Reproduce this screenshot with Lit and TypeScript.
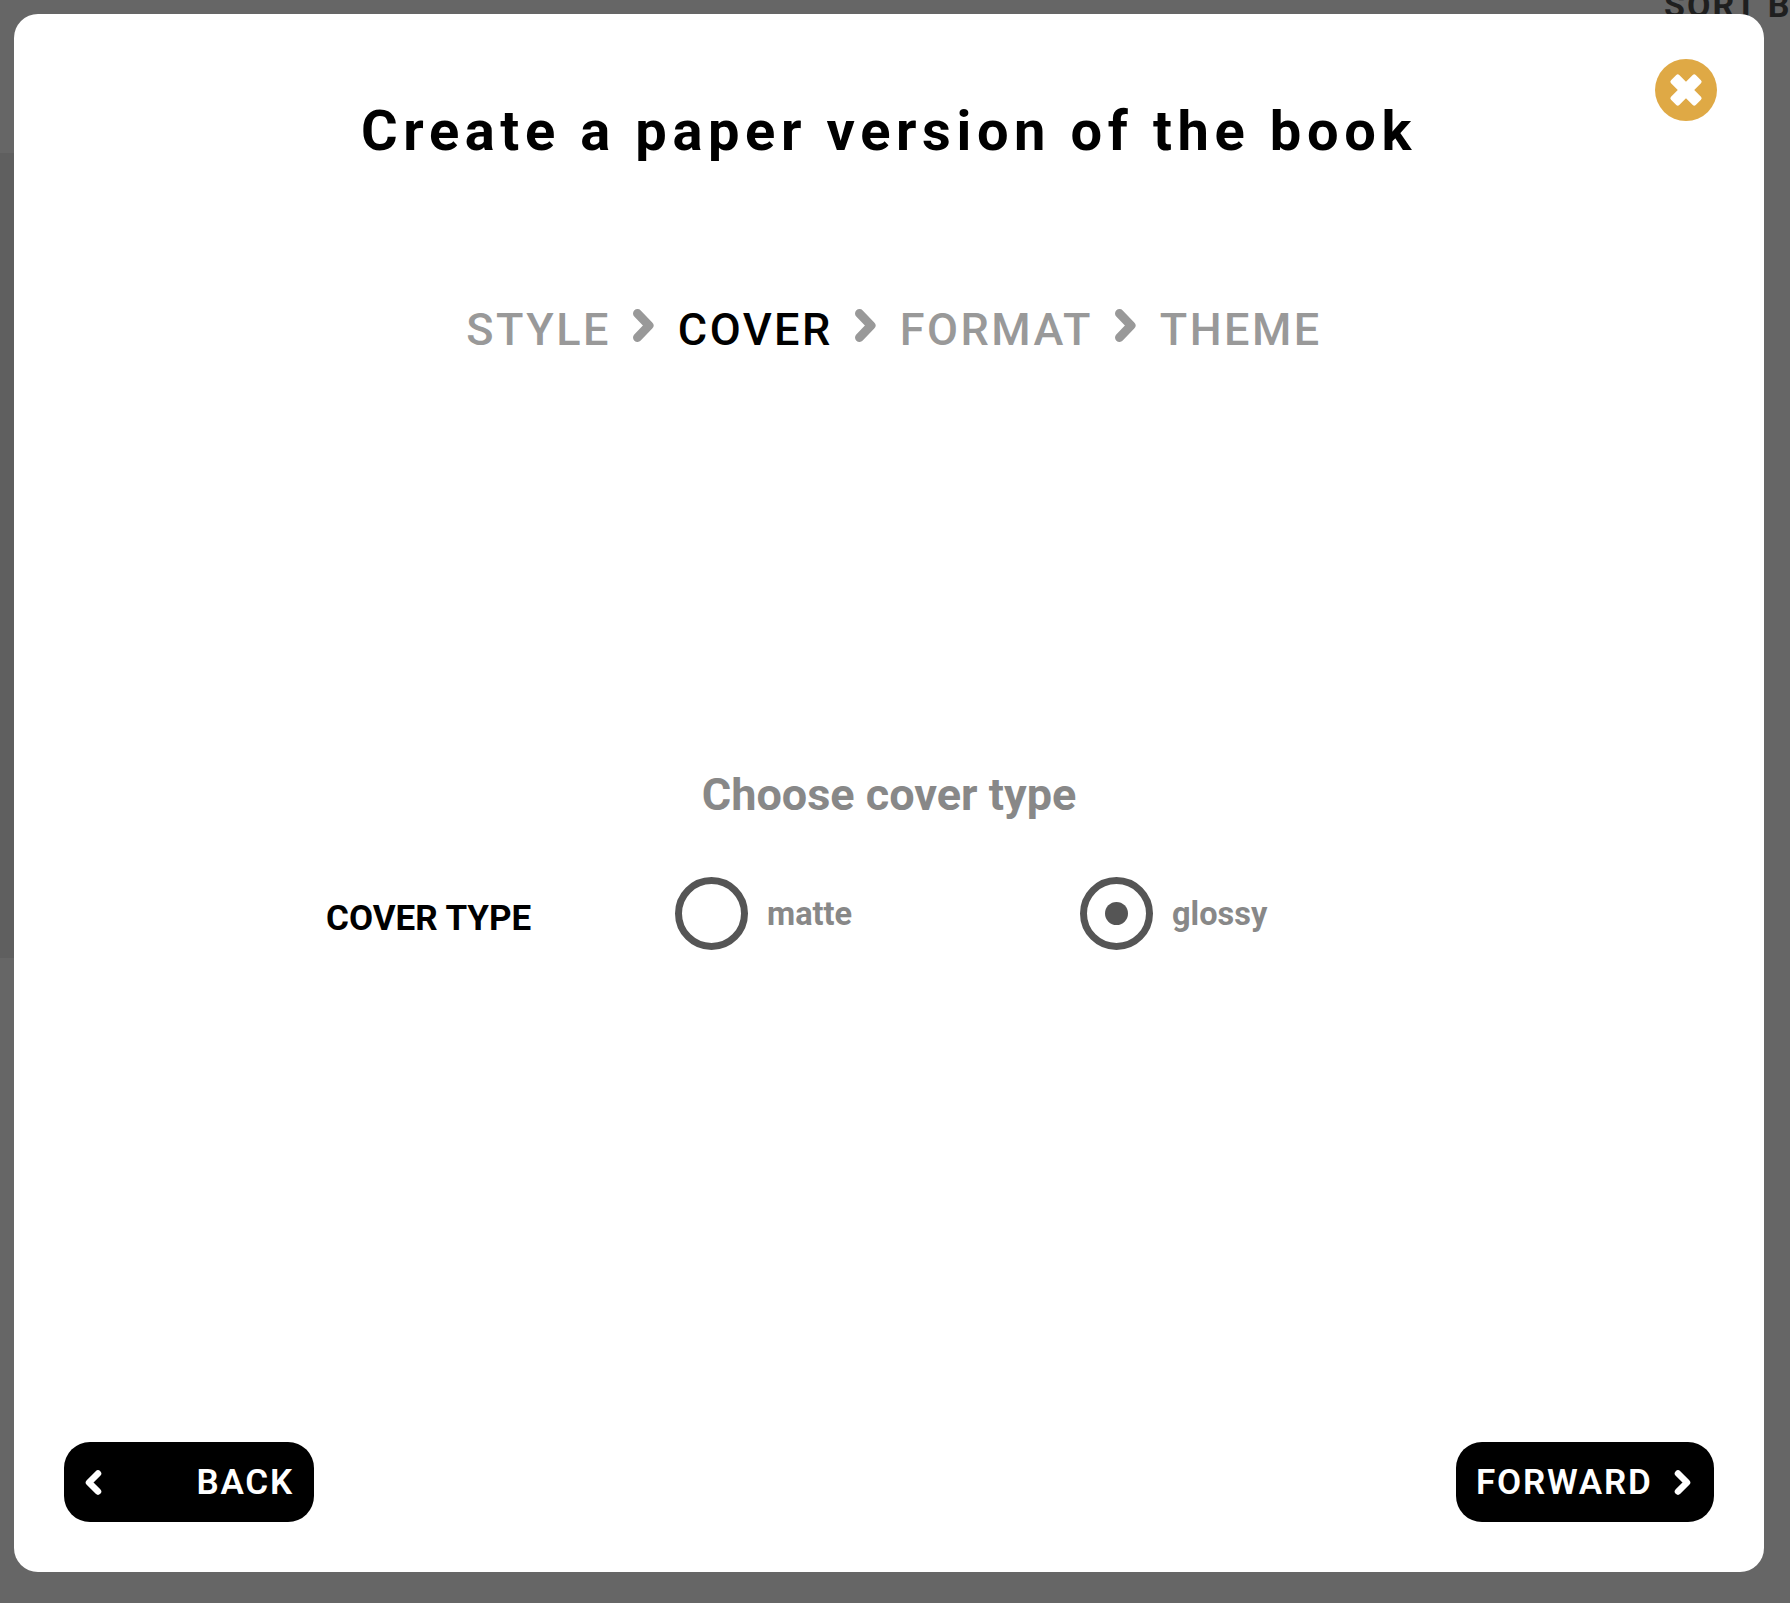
import { LitElement, html, css, svg } from "lit";
import { customElement } from "lit/decorators.js";

const chevron = (cls: string, d: string, vb: string) => html`<svg class=${cls} viewBox=${vb} aria-hidden="true">${svg`<path d=${d} fill="none" stroke="currentColor" stroke-linecap="round" stroke-linejoin="round"/>`}</svg>`;

@customElement("app-root")
export class AppRoot extends LitElement {
  static styles = css`
    :host {
      display: block;
      position: relative;
      width: 1790px;
      height: 1603px;
      overflow: hidden;
      box-sizing: border-box;
      padding: 14px 26px 31px 14px;
      font-family: Roboto, "Liberation Sans", sans-serif;
      background:
        linear-gradient(to bottom, #666 0 153px, #5f5f5f 153px 958px, #666 958px) left top / 14px 100% no-repeat,
        #666;
    }
    .behind {
      position: absolute;
      left: 1664px;
      top: -14px;
      font-size: 34px;
      font-weight: 700;
      letter-spacing: 2px;
      line-height: 38px;
      color: #1f1f1f;
      white-space: nowrap;
    }
    .modal {
      position: relative;
      box-sizing: border-box;
      height: 100%;
      background: #fff;
      border-radius: 24px;
      display: flex;
      flex-direction: column;
    }
    .close {
      position: absolute;
      right: 47px;
      top: 45px;
      width: 62px;
      height: 62px;
      border-radius: 50%;
      background: #dfa945;
      display: flex;
      align-items: center;
      justify-content: center;
    }
    .close svg { width: 36px; height: 36px; fill: #fff; }
    h1 {
      margin: 85px 0 0;
      text-align: center;
      font-size: 56px;
      line-height: 64px;
      font-weight: 700;
      letter-spacing: 5.6px;
      color: #000;
    }
    .steps {
      margin-top: 140px;
      padding-left: 10px;
      display: flex;
      justify-content: center;
      align-items: center;
      gap: 23px;
      font-size: 45px;
      line-height: 54px;
      font-weight: 500;
      letter-spacing: 2.45px;
      color: #999;
    }
    .steps .on { color: #000; }
    .sep { width: 21px; height: 33px; color: #999; stroke-width: 9px; margin: -10px 1px 0 -1px; }
    .sub {
      margin-top: 411px;
      text-align: center;
      font-size: 45px;
      line-height: 54px;
      font-weight: 700;
      color: #888;
    }
    .row {
      margin-top: 55px;
      display: flex;
      align-items: center;
      padding-left: 312px;
    }
    .label {
      width: 349px;
      font-size: 35px;
      line-height: 42px;
      font-weight: 700;
      color: #000;
      padding-top: 11px;
    }
    .opt {
      width: 405px;
      display: flex;
      align-items: center;
      gap: 19px;
      font-size: 32.5px;
      font-weight: 700;
      color: #888;
    }
    .radio {
      box-sizing: border-box;
      width: 73px;
      height: 73px;
      border: 7px solid #555;
      border-radius: 50%;
      display: flex;
      align-items: center;
      justify-content: center;
    }
    .dot { width: 23px; height: 23px; border-radius: 50%; background: #555; }
    .foot {
      margin-top: auto;
      padding: 0 50px 50px;
      display: flex;
      justify-content: space-between;
    }
    .btn {
      height: 80px;
      box-sizing: border-box;
      border-radius: 26px;
      background: #000;
      color: #fff;
      display: flex;
      align-items: center;
      justify-content: space-between;
      font-size: 35px;
      font-weight: 600;
      letter-spacing: 1.8px;
    }
    .back { width: 250px; padding: 0 20px 0 21px; }
    .fwd { width: 258px; padding: 0 23px 0 20px; }
    .btn svg { width: 17px; height: 25px; stroke-width: 6.5px; }
  `;

  render() {
    const sep = "M4.5 4.5 L16 16.5 L4.5 28.5";
    return html`
      <div class="behind">SORT BY</div>
      <div class="modal">
        <div class="close">
          <svg viewBox="0 0 34 34" aria-hidden="true">
            <rect x="0.5" y="11.5" width="33" height="11" rx="2" transform="rotate(45 17 17)"></rect>
            <rect x="0.5" y="11.5" width="33" height="11" rx="2" transform="rotate(-45 17 17)"></rect>
          </svg>
        </div>
        <h1>Create a paper version of the book</h1>
        <div class="steps">
          <span>STYLE</span>
          ${chevron("sep", sep, "0 0 21 33")}
          <span class="on">COVER</span>
          ${chevron("sep", sep, "0 0 21 33")}
          <span>FORMAT</span>
          ${chevron("sep", sep, "0 0 21 33")}
          <span>THEME</span>
        </div>
        <div class="sub">Choose cover type</div>
        <div class="row">
          <div class="label">COVER TYPE</div>
          <div class="opt"><span class="radio"></span><span>matte</span></div>
          <div class="opt"><span class="radio"><span class="dot"></span></span><span>glossy</span></div>
        </div>
        <div class="foot">
          <div class="btn back">${chevron("", "M13 3.5 L4 12.5 L13 21.5", "0 0 17 25")}<span>BACK</span></div>
          <div class="btn fwd"><span>FORWARD</span>${chevron("", "M4 3.5 L13 12.5 L4 21.5", "0 0 17 25")}</div>
        </div>
      </div>
    `;
  }
}
